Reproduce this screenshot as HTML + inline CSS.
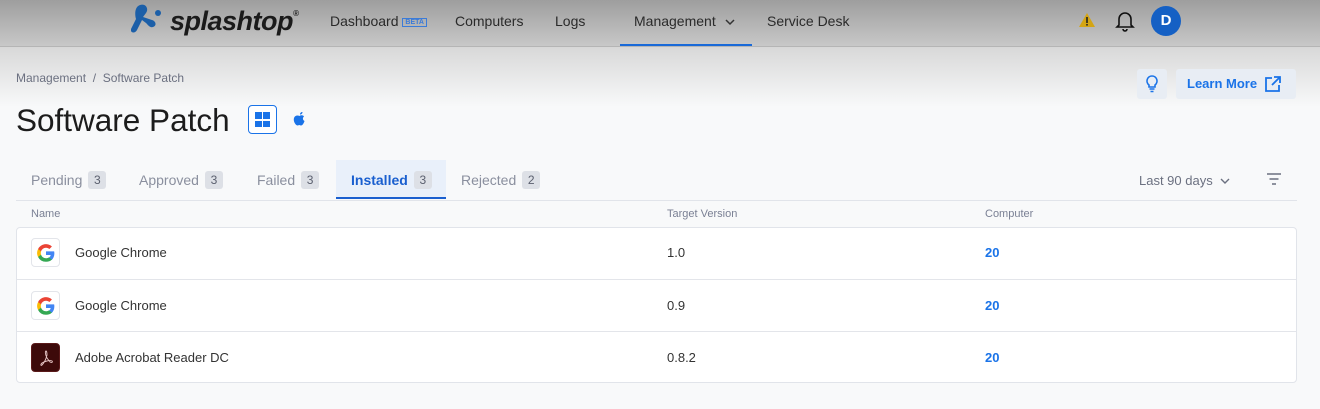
<!DOCTYPE html>
<html><head><meta charset="utf-8"><style>
*{margin:0;padding:0;box-sizing:border-box}
body{width:1320px;height:409px;overflow:hidden;font-family:"Liberation Sans",sans-serif;background:#f8f9fa;position:relative;color:#222}
.hdr{position:absolute;left:0;top:0;width:1320px;height:47px;background:linear-gradient(#9e9e9e,#c8c8c8);border-bottom:1px solid #b5b5b5}
.sub{position:absolute;left:0;top:47px;width:1320px;height:60px;background:linear-gradient(#d8d8d8,#f8f9fa)}
.nav{position:absolute;top:13px;font-size:14px;color:#2a2a2a}
.abs{position:absolute}
.tab{position:absolute;top:171px;font-size:14px;color:#8a8f9e}
.badge{display:inline-block;background:#dde0e6;color:#5a5f6e;font-size:12px;width:18px;height:18px;line-height:18px;text-align:center;border-radius:3px;margin-left:6px;vertical-align:1px}
.row{position:absolute;left:17px;width:1279px;height:52px;border-top:1px solid #e3e5ea}
.row .ic{position:absolute;left:14px;top:11px;width:29px;height:29px;border:1px solid #e3e5ea;border-radius:4px;background:#fff}
.row .nm{position:absolute;left:58px;top:18px;font-size:13px;color:#333}
.row .v{position:absolute;left:650px;top:18px;font-size:13px;color:#333}
.row .c{position:absolute;left:968px;top:18px;font-size:13px;color:#1a73e8;font-weight:bold}
</style></head><body>
<div class="hdr"></div><div class="sub"></div>
<svg class="abs" style="left:131px;top:3px" width="36" height="32" viewBox="0 0 36 32"><path d="M9 2c6-2 9 4 6 8l-3 4 9 3c4 1 5 6 1 7-3 1-5-2-7-4l-4-3-5 10c-2 4-7 3-6-1l5-10C4 13 3 4 9 2z" fill="#1c5fa8"/><circle cx="27" cy="10" r="3" fill="#1c5fa8"/></svg>
<div class="abs" style="left:170px;top:6px;font-size:27px;font-style:italic;font-weight:bold;color:#1b1b1b;letter-spacing:-0.5px">splashtop<span style="font-size:8px;vertical-align:14px">®</span></div>
<div class="nav" style="left:330px">Dashboard <span style="font-size:7px;color:#3b7bd8;border:1px solid #3b7bd8;padding:0 2px;vertical-align:2px;font-weight:bold">BETA</span></div>
<div class="nav" style="left:455px">Computers</div>
<div class="nav" style="left:555px">Logs</div>
<div class="nav" style="left:634px">Management <svg width="12" height="8" viewBox="0 0 12 8" style="margin-left:4px"><path d="M2 2l4 4 4-4" stroke="#333" stroke-width="1.5" fill="none"/></svg></div>
<div class="abs" style="left:620px;top:44px;width:132px;height:2px;background:#1a6ad8"></div>
<div class="nav" style="left:767px">Service Desk</div>
<svg class="abs" style="left:1078px;top:12px" width="18" height="16" viewBox="0 0 18 16"><path d="M9 1l8 14H1z" fill="#d4a514"/><rect x="8.2" y="5" width="1.6" height="6" fill="#222"/><rect x="8.2" y="12" width="1.6" height="1.6" fill="#222"/></svg>
<svg class="abs" style="left:1115px;top:10px" width="20" height="22" viewBox="0 0 20 22"><path d="M4 15V9a6 6 0 0112 0v6l2 2H2z M8 19a2 2 0 004 0" stroke="#111" stroke-width="1.6" fill="none"/></svg>
<div class="abs" style="left:1151px;top:6px;width:30px;height:30px;border-radius:50%;background:#1560c4;color:#fff;font-weight:bold;font-size:15px;text-align:center;line-height:30px">D</div>
<div class="abs" style="left:16px;top:71px;font-size:12px;color:#6b7080">Management &nbsp;/ &nbsp;Software Patch</div>
<div class="abs" style="left:16px;top:102px;font-size:31.5px;color:#1c1c1c">Software Patch</div>
<div class="abs" style="left:248px;top:105px;width:29px;height:29px;border:1.5px solid #1a73e8;border-radius:4px;background:#fff"><div style="position:absolute;left:6px;top:6px;width:15px;height:15px;background:linear-gradient(90deg,#1a73e8 47%,#fff 47%,#fff 53%,#1a73e8 53%)"></div><div style="position:absolute;left:6px;top:13px;width:15px;height:1.5px;background:#fff"></div></div>
<svg class="abs" style="left:292px;top:111px" width="15" height="17" viewBox="0 0 15 17"><path d="M7.5 5c1.5-1 3.5-1 4.5.5-1.5 1-1.5 3.5.5 4.5-.5 2-2 4.5-3.5 4.5-1 0-1.2-.5-1.7-.5s-1 .5-1.8.5C3.5 14.5 1 10 2 7c.8-2.5 3.5-3 5.5-2z M8 3.5c0-1.5 1-2.5 2.5-2.5 0 1.5-1 2.5-2.5 2.5z" fill="#1a73e8"/></svg>
<div class="abs" style="left:1137px;top:69px;width:30px;height:30px;background:#e8edf4;border-radius:3px"><svg style="position:absolute;left:8px;top:6px" width="14" height="18" viewBox="0 0 14 18"><path d="M7 1a5 5 0 00-3 9v2h6v-2a5 5 0 00-3-9z M4.5 14h5 M5.5 16.5h3" stroke="#1a73e8" stroke-width="1.6" fill="none"/></svg></div>
<div class="abs" style="left:1176px;top:69px;width:120px;height:30px;background:#e8edf4;border-radius:3px;color:#1a73e8;font-weight:bold;font-size:13px;line-height:30px;padding-left:11px">Learn More<svg style="position:absolute;left:88px;top:6px" width="18" height="18" viewBox="0 0 18 18"><path d="M8 3H2v13h13v-6 M10 2h6v6 M16 2L8 10" stroke="#1a73e8" stroke-width="1.8" fill="none"/></svg></div>
<div class="abs" style="left:336px;top:160px;width:110px;height:39px;background:#e9f0fa;border-bottom:2px solid #1a5fcf"></div>
<div class="tab" style="left:31px">Pending<span class="badge">3</span></div>
<div class="tab" style="left:139px">Approved<span class="badge">3</span></div>
<div class="tab" style="left:257px">Failed<span class="badge">3</span></div>
<div class="tab" style="left:351px;color:#1a5fcf;font-weight:bold">Installed<span class="badge" style="font-weight:normal">3</span></div>
<div class="tab" style="left:461px">Rejected<span class="badge">2</span></div>
<div class="abs" style="left:1139px;top:173px;font-size:13px;color:#6b7080">Last 90 days <svg width="12" height="8" viewBox="0 0 12 8" style="margin-left:3px"><path d="M2 2l4 4 4-4" stroke="#6b7080" stroke-width="1.4" fill="none"/></svg></div>
<svg class="abs" style="left:1265px;top:172px" width="18" height="16" viewBox="0 0 18 16"><path d="M2 2h14M4.5 7h9M7 12h4" stroke="#6b7080" stroke-width="1.6"/></svg>
<div class="abs" style="left:16px;top:200px;width:1281px;height:1px;background:#e1e4ea"></div>
<div class="abs" style="left:31px;top:208px;font-size:11px;color:#7a8094">Name</div>
<div class="abs" style="left:667px;top:208px;font-size:11px;color:#7a8094">Target Version</div>
<div class="abs" style="left:985px;top:208px;font-size:11px;color:#7a8094">Computer</div>
<div class="abs" style="left:16px;top:227px;width:1281px;height:156px;background:#fff;border:1px solid #e1e4ea;border-radius:4px"></div>
<div class="row" style="top:227px;border-top:none"><div class="ic"><svg style="position:absolute;left:3px;top:3px" width="22" height="22" viewBox="0 0 20 20"><path d="M17.6 10.2c0-.6-.1-1.2-.2-1.7H10v3.3h4.3a3.7 3.7 0 01-1.6 2.4v2h2.6c1.5-1.4 2.3-3.5 2.3-6z" fill="#4285f4"/><path d="M10 18c2.2 0 4-.7 5.3-2l-2.6-2c-.7.5-1.6.8-2.7.8-2.1 0-3.9-1.4-4.5-3.3H2.8v2.1A8 8 0 0010 18z" fill="#34a853"/><path d="M5.5 11.5a4.8 4.8 0 010-3V6.4H2.8a8 8 0 000 7.2z" fill="#fbbc05"/><path d="M10 5.2c1.2 0 2.2.4 3.1 1.2l2.3-2.3A8 8 0 002.8 6.4l2.7 2.1C6.1 6.6 7.9 5.2 10 5.2z" fill="#ea4335"/></svg></div><div class="nm">Google Chrome</div><div class="v">1.0</div><div class="c">20</div></div>
<div class="row" style="top:279px"><div class="ic"><svg style="position:absolute;left:3px;top:3px" width="22" height="22" viewBox="0 0 20 20"><path d="M17.6 10.2c0-.6-.1-1.2-.2-1.7H10v3.3h4.3a3.7 3.7 0 01-1.6 2.4v2h2.6c1.5-1.4 2.3-3.5 2.3-6z" fill="#4285f4"/><path d="M10 18c2.2 0 4-.7 5.3-2l-2.6-2c-.7.5-1.6.8-2.7.8-2.1 0-3.9-1.4-4.5-3.3H2.8v2.1A8 8 0 0010 18z" fill="#34a853"/><path d="M5.5 11.5a4.8 4.8 0 010-3V6.4H2.8a8 8 0 000 7.2z" fill="#fbbc05"/><path d="M10 5.2c1.2 0 2.2.4 3.1 1.2l2.3-2.3A8 8 0 002.8 6.4l2.7 2.1C6.1 6.6 7.9 5.2 10 5.2z" fill="#ea4335"/></svg></div><div class="nm">Google Chrome</div><div class="v">0.9</div><div class="c">20</div></div>
<div class="row" style="top:331px"><div class="ic" style="background:#3d0a0a;border-color:#5a1a1a"><svg style="position:absolute;left:6px;top:5px" width="17" height="18" viewBox="0 0 17 18"><path d="M8 2c-1 0-1 3 1 7l3 4c2 1 3 0 2-1-2-1-7 0-10 2-2 2-1 3 0 2 2-2 4-6 5-10 0-2-.5-4-1-4z" stroke="#e8c8c8" stroke-width="0.9" fill="none"/></svg></div><div class="nm">Adobe Acrobat Reader DC</div><div class="v">0.8.2</div><div class="c">20</div></div>
</body></html>
